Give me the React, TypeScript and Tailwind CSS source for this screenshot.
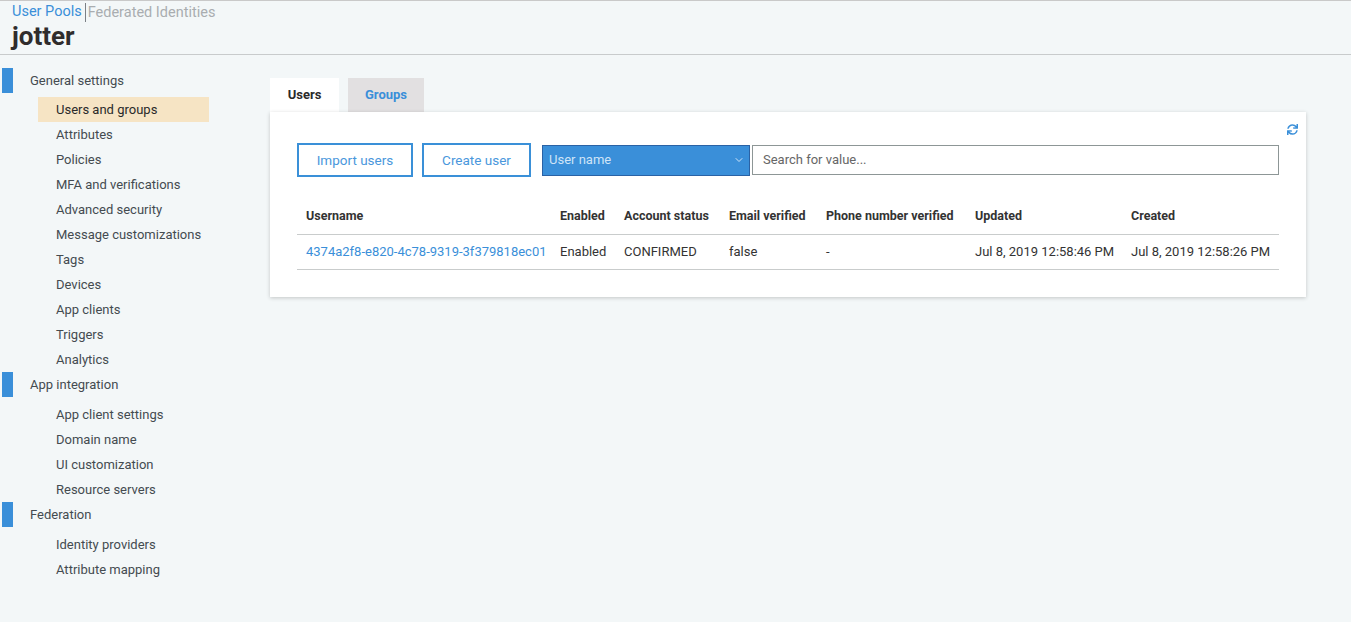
import { FaSync } from "react-icons/fa";
import { ChevronDown } from "lucide-react";

const sections = [
  { title: "General settings", mt: "mt-[4px]", items: ["Users and groups", "Attributes", "Policies", "MFA and verifications", "Advanced security", "Message customizations", "Tags", "Devices", "App clients", "Triggers", "Analytics"] },
  { title: "App integration", mt: "mt-[5px]", items: ["App client settings", "Domain name", "UI customization", "Resource servers"] },
  { title: "Federation", mt: "mt-[5px]", items: ["Identity providers", "Attribute mapping"] },
];

const columns = [
  { h: "Username", w: "w-[254px]" },
  { h: "Enabled", w: "w-[64px]" },
  { h: "Account status", w: "w-[105px]" },
  { h: "Email verified", w: "w-[97px]" },
  { h: "Phone number verified", w: "w-[149px]" },
  { h: "Updated", w: "w-[156px]" },
  { h: "Created", w: "w-[157px]" },
];
const row = ["4374a2f8-e820-4c78-9319-3f379818ec01", "Enabled", "CONFIRMED", "false", "-", "Jul 8, 2019 12:58:46 PM", "Jul 8, 2019 12:58:26 PM"];

export default function App() {
  return (
    <div className="h-[622px] overflow-hidden bg-[#f3f7f8] font-['Roboto',sans-serif] text-[13px] text-[#333] border-t border-[#c9c9c9]">
      <header className="h-[53px] border-b border-[#c8cbcc] pl-[12px] box-content">
        <div className="flex items-center pt-[2px] h-[20px] text-[14.5px] leading-[20px]">
          <span className="text-[#3a8fd9] pr-[3px]">User Pools</span>
          <span className="border-l border-[#7b8085] pl-[2px] text-[#a9adb0] h-[19px]">Federated Identities</span>
        </div>
        <h1 className="text-[26px] leading-[30px] font-bold text-[#2f2c2c]">jotter</h1>
      </header>
      <div className="flex">
        <nav className="w-[270px] shrink-0 pt-[13px] pl-[2px]">
          {sections.map((s) => (
            <div key={s.title}>
              <div className="flex h-[25px] items-center">
                <span className="w-[11px] h-[25px] bg-[#3a8fd9]" />
                <span className="ml-[17px] text-[#444b50]">{s.title}</span>
              </div>
              <ul className={s.mt}>
                {s.items.map((i) => (
                  <li key={i} className={"ml-[36px] w-[171px] h-[25px] pl-[18px] leading-[25px] " + (i === "Users and groups" ? "bg-[#f6e4c4] text-[#2a2a2a]" : "text-[#444b50]")}>
                    {i}
                  </li>
                ))}
              </ul>
            </div>
          ))}
        </nav>
        <main className="w-[1036px] pt-[23px]">
          <div className="flex gap-[9px] h-[34px] font-bold text-[13px]">
            <div className="w-[69px] bg-white flex items-center justify-center text-[#2a2a2a]">Users</div>
            <div className="w-[76px] bg-[#e2e0e1] flex items-center justify-center text-[#3a8fd9]">Groups</div>
          </div>
          <section className="relative bg-white h-[185px] shadow-[0_1px_4px_rgba(0,0,0,0.2)] pt-[31px] pl-[27px]">
            <FaSync className="absolute right-[8px] top-[12px] text-[#3a8fd9] text-[11px]" />
            <div className="flex items-center w-[982px] h-[34px]">
              <button className="w-[116px] h-[34px] border-2 border-[#3a90d8] text-[#4a97dc] text-[13.5px]">Import users</button>
              <button className="ml-[9px] w-[109px] h-[34px] border-2 border-[#3a90d8] text-[#4a97dc] text-[13.5px]">Create user</button>
              <div className="ml-[11px] w-[208px] h-[31px] bg-[#3a8fd9] border border-[#2a62a5] flex items-center justify-between pl-[6px] pr-[4px] text-[#cfe4f7]">
                <span>User name</span>
                <ChevronDown size={12} strokeWidth={2} />
              </div>
              <div className="ml-[2px] flex-1 h-[30px] bg-white border border-[#8d9696] flex items-center pl-[10px] text-[#666]">Search for value...</div>
            </div>
            <table className="mt-[22px] w-[982px] table-fixed border-collapse">
              <thead>
                <tr className="h-[35px] border-b border-[#c9cccc]">
                  {columns.map((c) => (
                    <th key={c.h} className={c.w + " pl-[9px] text-left font-bold text-[12.5px] text-[#333] whitespace-nowrap"}>{c.h}</th>
                  ))}
                </tr>
              </thead>
              <tbody>
                <tr className="h-[35px] border-b border-[#c9cccc]">
                  {row.map((v, i) => (
                    <td key={v} className={"pl-[9px] whitespace-nowrap " + (i === 0 ? "text-[#3a8fd9]" : "text-[#333]")}>{v}</td>
                  ))}
                </tr>
              </tbody>
            </table>
          </section>
        </main>
      </div>
    </div>
  );
}
